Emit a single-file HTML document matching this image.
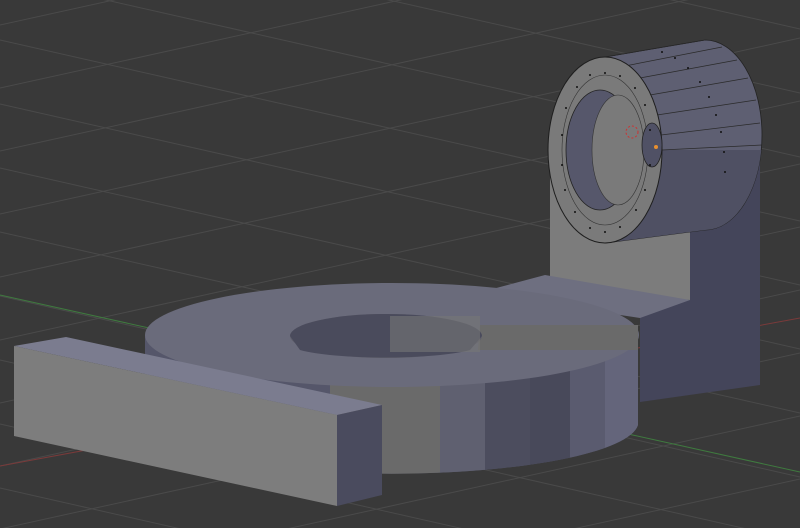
<!DOCTYPE html>
<html><head><style>html,body{margin:0;padding:0;background:#393939;width:800px;height:528px;overflow:hidden}svg{display:block}</style></head>
<body>
<svg width="800" height="528" viewBox="0 0 800 528" xmlns="http://www.w3.org/2000/svg" overflow="hidden">
<defs>
<clipPath id="band"><path d="M145,335 L145,425 A247,52 0 0 0 638,425 L638,335 Z"/></clipPath>
<clipPath id="cyl"><path d="M605,57 L705,40 A57,95 0 0 1 705,230 L605,243 Z"/></clipPath>
</defs>
<rect width="800" height="528" fill="#393939"/>
<g stroke="#4a4a4a" stroke-width="1">
<line x1="0" y1="25" x2="800" y2="-151"/>
<line x1="0" y1="88" x2="800" y2="-88"/>
<line x1="0" y1="151" x2="800" y2="-25"/>
<line x1="0" y1="214" x2="800" y2="38"/>
<line x1="0" y1="277" x2="800" y2="101"/>
<line x1="0" y1="340" x2="800" y2="164"/>
<line x1="0" y1="403" x2="800" y2="227"/>
<line x1="0" y1="466" x2="800" y2="290"/>
<line x1="0" y1="529" x2="800" y2="353"/>
<line x1="0" y1="592" x2="800" y2="416"/>
<line x1="0" y1="655" x2="800" y2="479"/>
<line x1="0" y1="718" x2="800" y2="542"/>
<line x1="0" y1="-152" x2="800" y2="29"/>
<line x1="0" y1="-88" x2="800" y2="93"/>
<line x1="0" y1="-24" x2="800" y2="157"/>
<line x1="0" y1="40" x2="800" y2="221"/>
<line x1="0" y1="104" x2="800" y2="285"/>
<line x1="0" y1="168" x2="800" y2="349"/>
<line x1="0" y1="232" x2="800" y2="413"/>
<line x1="0" y1="296" x2="800" y2="477"/>
<line x1="0" y1="360" x2="800" y2="541"/>
<line x1="0" y1="424" x2="800" y2="605"/>
<line x1="0" y1="488" x2="800" y2="669"/>
</g>
<line x1="0" y1="295" x2="800" y2="472" stroke="#3f7a3f" stroke-width="1"/>
<line x1="0" y1="466" x2="800" y2="318" stroke="#7a3a3a" stroke-width="1"/>

<!-- upright right side dark -->
<polygon points="690,170 760,158 760,385 640,402 640,300 690,300" fill="#44455a"/>
<!-- upright front face -->
<polygon points="550,150 690,150 690,300 550,290" fill="#7c7c7c"/>
<!-- plate top behind disc -->
<polygon points="470,295 545,275 690,300 640,318 520,300" fill="#6e6f80"/>

<!-- cylinder band -->
<path d="M605,57 L705,40 A57,95 0 0 1 705,230 L605,243 Z" fill="#5e5f72" stroke="#222" stroke-width="0.8"/>
<g clip-path="url(#cyl)">
<rect x="600" y="150" width="170" height="100" fill="#4f5063"/>
<g stroke="#2a2a2a" stroke-width="0.7">
<line x1="605" y1="57" x2="705" y2="40"/><line x1="625" y1="66" x2="722" y2="47"/>
<line x1="640" y1="78" x2="737" y2="60"/><line x1="650" y1="95" x2="748" y2="78"/>
<line x1="657" y1="115" x2="756" y2="100"/><line x1="661" y1="135" x2="760" y2="123"/>
<line x1="662" y1="150" x2="762" y2="145"/>
</g>
</g>
<!-- cylinder front face -->
<ellipse cx="605" cy="150" rx="57" ry="93" fill="#7a7a7a" stroke="#1e1e1e" stroke-width="1"/>
<ellipse cx="605" cy="150" rx="43" ry="75" fill="none" stroke="#333" stroke-width="0.6"/>
<ellipse cx="600" cy="150" rx="34" ry="60" fill="#56576b" stroke="#222" stroke-width="0.8"/>
<ellipse cx="618" cy="150" rx="26" ry="55" fill="#7a7a7a" stroke="#333" stroke-width="0.6"/>
<ellipse cx="652" cy="145" rx="10" ry="22" fill="#505165" stroke="#222" stroke-width="0.8"/>
<circle cx="632" cy="132" r="6" fill="none" stroke="#c33" stroke-width="1" stroke-dasharray="2,2"/>
<circle cx="656" cy="147" r="2" fill="#e89030"/>
<g fill="#111">
<circle cx="577" cy="87" r="1"/><circle cx="590" cy="75" r="1"/><circle cx="605" cy="73" r="1"/><circle cx="620" cy="76" r="1"/><circle cx="635" cy="88" r="1"/><circle cx="645" cy="105" r="1"/><circle cx="650" cy="130" r="1"/><circle cx="650" cy="165" r="1"/><circle cx="645" cy="190" r="1"/><circle cx="636" cy="210" r="1"/><circle cx="620" cy="227" r="1"/><circle cx="605" cy="232" r="1"/><circle cx="590" cy="228" r="1"/><circle cx="575" cy="212" r="1"/><circle cx="565" cy="190" r="1"/><circle cx="562" cy="165" r="1"/><circle cx="562" cy="135" r="1"/><circle cx="566" cy="108" r="1"/>
<circle cx="662" cy="52" r="1"/><circle cx="675" cy="58" r="1"/><circle cx="688" cy="68" r="1"/><circle cx="700" cy="82" r="1"/><circle cx="709" cy="97" r="1"/><circle cx="716" cy="115" r="1"/><circle cx="721" cy="132" r="1"/><circle cx="724" cy="152" r="1"/><circle cx="725" cy="172" r="1"/>
</g>

<!-- base disc side band -->
<g clip-path="url(#band)">
<rect x="140" y="330" width="500" height="160" fill="#55566a"/>
<rect x="330" y="330" width="110" height="160" fill="#6a6a6a"/>
<rect x="440" y="330" width="45" height="160" fill="#5f6070"/>
<rect x="485" y="330" width="45" height="160" fill="#4c4d5e"/>
<rect x="530" y="330" width="40" height="160" fill="#48495a"/>
<rect x="570" y="330" width="35" height="160" fill="#5a5b6f"/>
<rect x="605" y="330" width="33" height="160" fill="#64657b"/>
</g>
<!-- disc top -->
<ellipse cx="392" cy="335" rx="247" ry="52" fill="#6a6b7b"/>
<!-- slot -->
<polygon points="480,325 638,325 638,350 478,350" fill="#6a6a6a"/>
<!-- hole -->
<ellipse cx="386" cy="336" rx="96" ry="22" fill="#5f5f6a"/>
<path d="M290,336 A96,22 0 0 1 482,336 L470,350 A96,14 0 0 1 300,350 Z" fill="#4a4b5c"/>
<rect x="390" y="316" width="90" height="36" fill="#767676" opacity="0.6"/>

<!-- front bar -->
<polygon points="14,346 66,337 382,405 337,415" fill="#7b7c8f"/>
<polygon points="14,346 337,415 337,506 14,436" fill="#7d7d7d"/>
<polygon points="337,415 382,405 382,495 337,506" fill="#4a4b5e"/>
</svg>
</body></html>
